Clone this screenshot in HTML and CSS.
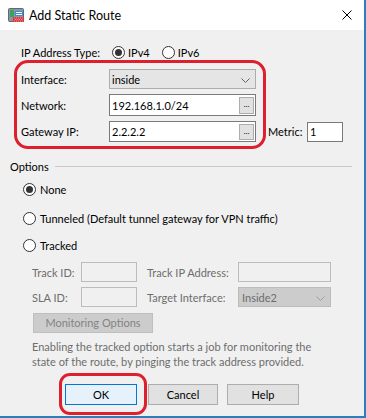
FILE: index.html
```html
<!DOCTYPE html>
<html>
<head>
<meta charset="utf-8">
<link rel="stylesheet" href="styles.css">
</head>
<body>
<div class="window">
  <div class="titlebar">
    <svg class="appicon" width="16" height="16" viewBox="0 0 16 16">
      <rect x="0.5" y="1.5" width="15" height="13" rx="1" fill="#8a97a3" stroke="#5d6a75"/>
      <rect x="2" y="3" width="4" height="7" fill="#3aa35a"/>
      <rect x="7" y="4" width="8" height="5" fill="#3c8fd6"/>
      <path d="M8 5.5h6M8 7.5h6" stroke="#fff" stroke-width="1"/>
      <rect x="5" y="10" width="11" height="5" fill="#d9363e"/>
      <path d="M6 11h1M8 11h1M10 11h1M12 11h1M14 11h1M7 12.5h1M9 12.5h1M11 12.5h1M13 12.5h1M6 14h1M8 14h1M10 14h1M12 14h1M14 14h1" stroke="#f3b3b6" stroke-width="0.8"/>
    </svg>
    <span class="title">Add Static Route</span>
    <svg class="close" width="10" height="10" viewBox="0 0 10 10">
      <path d="M0.5 0.5L9.5 9.5M9.5 0.5L0.5 9.5" stroke="#000" stroke-width="1"/>
    </svg>
  </div>
  <div class="content">
    <div class="row-ip">
      <span class="lbl-ip">IP Address Type:</span>
      <span class="radio checked"></span><span class="rlabel">IPv4</span>
      <span class="radio r-ipv6"></span><span class="rlabel">IPv6</span>
    </div>

    <div class="frow f-interface">
      <span class="flabel">Interface:</span>
      <div class="combo"><span>inside</span>
        <svg class="chev" width="9" height="5" viewBox="0 0 9 5"><path d="M0.5 0.5L4.5 4.5L8.5 0.5" fill="none" stroke="#606060"/></svg>
      </div>
    </div>
    <div class="frow f-network">
      <span class="flabel">Network:</span>
      <div class="input wide"><span>192.168.1.0/24</span><span class="ell">...</span></div>
    </div>
    <div class="frow f-gateway">
      <span class="flabel">Gateway IP:</span>
      <div class="input wide gw"><span>2.2.2.2</span><span class="ell">...</span></div>
      <span class="metric-lbl">Metric:</span>
      <div class="input metric"><span>1</span></div>
    </div>

    <div class="legend"><span>Options</span><div class="rule"></div></div>

    <div class="opt o-none"><span class="radio checked"></span><span class="rlabel">None</span></div>
    <div class="opt o-tun"><span class="radio"></span><span class="rlabel">Tunneled (Default tunnel gateway for VPN traffic)</span></div>
    <div class="opt o-trk"><span class="radio"></span><span class="rlabel">Tracked</span></div>

    <div class="trow t1">
      <span class="tlabel l1">Track ID:</span>
      <div class="dinput small"></div>
      <span class="tlabel l2">Track IP Address:</span>
      <div class="dinput big"></div>
    </div>
    <div class="trow t2">
      <span class="tlabel l1">SLA ID:</span>
      <div class="dinput small"></div>
      <span class="tlabel l2">Target Interface:</span>
      <div class="dcombo"><span>Inside2</span>
        <svg class="chev" width="9" height="5" viewBox="0 0 9 5"><path d="M0.5 0.5L4.5 4.5L8.5 0.5" fill="none" stroke="#a0a0a0"/></svg>
      </div>
    </div>
    <div class="monbtn">Monitoring Options</div>
    <p class="help">Enabling the tracked option starts a job for monitoring the<br>state of the route, by pinging the track address provided.</p>

    <div class="buttons">
      <div class="btn ok">OK</div>
      <div class="btn cancel">Cancel</div>
      <div class="btn help-btn">Help</div>
    </div>
  </div>
  <div class="hl hl-top"></div>
  <div class="hl hl-ok"></div>
</div>
</body>
</html>
```
FILE: styles.css
```css
* { box-sizing: border-box; }
html, body { margin: 0; padding: 0; }
body {
  width: 366px; height: 418px; overflow: hidden;
  font-family: Lato, "Liberation Sans", sans-serif;
  font-size: 11px; color: #000;
}
.window {
  position: relative;
  width: 366px; height: 418px;
  background: #f0f0f0;
  border-right: 2px solid #2a7fc0;
  border-bottom: 2px solid #2a7fc0;
}
.titlebar {
  height: 30px; background: #fff;
  display: flex; align-items: center;
  padding-left: 8px;
}
.appicon { display: block; }
.title { margin-left: 5px; font-size: 12.5px; }
.close { margin-left: auto; margin-right: 12px; }
.content { padding-top: 14px; }

.row-ip { height: 16px; display: flex; align-items: center; padding-left: 21px; }
.lbl-ip { width: 91px; }
.radio {
  width: 13px; height: 13px; border-radius: 50%;
  border: 1px solid #333; background: #fff;
  display: inline-flex; align-items: center; justify-content: center;
  flex: none;
}
.radio.checked::after {
  content: ""; width: 7px; height: 7px; border-radius: 50%; background: #333;
}
.rlabel { margin-left: 3px; }
.r-ipv6 { margin-left: 12px; }

.frow { display: flex; align-items: center; padding-left: 21px; }
.flabel { width: 88px; }
.f-interface { margin-top: 9px; height: 20px; }
.f-network { margin-top: 5px; height: 22px; }
.f-gateway { margin-top: 5px; height: 21px; }
.combo {
  width: 147px; height: 20px;
  background: #e5e5e5; border: 1px solid #adadad;
  display: flex; align-items: center; padding-left: 2px;
}
.chev { margin-left: auto; margin-right: 5px; margin-top: 2px; }
.input {
  height: 100%;
  background: #fff; border: 1px solid #7a7a7a;
  display: flex; align-items: center; padding-left: 2px;
}
.input.wide { width: 147px; }
.ell {
  margin-left: auto; margin-right: 1px;
  width: 15px; height: 17px;
  background: #e1e1e1; border: 1px solid #adadad;
  font-size: 8px; line-height: 12px; text-align: center;
}
.gw .ell { height: 16px; }
.metric-lbl { margin-left: 12px; width: 39px; }
.input.metric { width: 36px; height: 20px; }

.legend { margin-top: 16px; height: 16px; display: flex; align-items: center; padding-left: 10px; padding-right: 12px; }
.rule { flex: 1; height: 1px; background: #c8c8c8; margin-left: 6px; margin-top: 1px; }

.opt { display: flex; align-items: center; height: 16px; padding-left: 23px; }
.opt .rlabel { margin-left: 4px; }
.o-none { margin-top: 7px; }
.o-tun { margin-top: 13px; }
.o-trk { margin-top: 11px; }

.trow { display: flex; align-items: center; height: 20px; padding-left: 32px; color: #6d6d6d; }
.t1 { margin-top: 9px; }
.t2 { margin-top: 5px; }
.tlabel.l1 { width: 49px; }
.tlabel.l2 { width: 91px; margin-left: 10px; }
.dinput { height: 20px; border: 1px solid #bcbcbc; background: #f0f0f0; }
.dinput.small { width: 56px; }
.dinput.big { width: 93px; }
.dcombo {
  width: 93px; height: 20px;
  background: #cccccc; border: 1px solid #bcbcbc;
  display: flex; align-items: center; padding-left: 3px; color: #6d6d6d;
}
.monbtn {
  margin-top: 6px; margin-left: 33px;
  width: 120px; height: 20px;
  background: #cccccc; border: 1px solid #bfbfbf;
  color: #838383; text-align: center; line-height: 18px;
}
.help { margin: 6px 0 0 32px; line-height: 15px; color: #6d6d6d; }

.buttons { margin-top: 15px; display: flex; padding-left: 65px; }
.btn {
  height: 21px; background: #e1e1e1; border: 1px solid #adadad;
  display: flex; align-items: center; justify-content: center;
}
.btn.ok { width: 72px; background: #e5f1fb; border-color: #0078d7; }
.btn.cancel { width: 70px; margin-left: 11px; }
.btn.help-btn { width: 72px; margin-left: 9px; }

.hl { position: absolute; border: 3.5px solid #de1f2d; }
.hl-top { left: 14px; top: 60px; width: 252px; height: 89px; border-radius: 14px; }
.hl-ok { left: 59px; top: 373px; width: 88px; height: 42px; border-radius: 11px; border-width: 3px; }
```
